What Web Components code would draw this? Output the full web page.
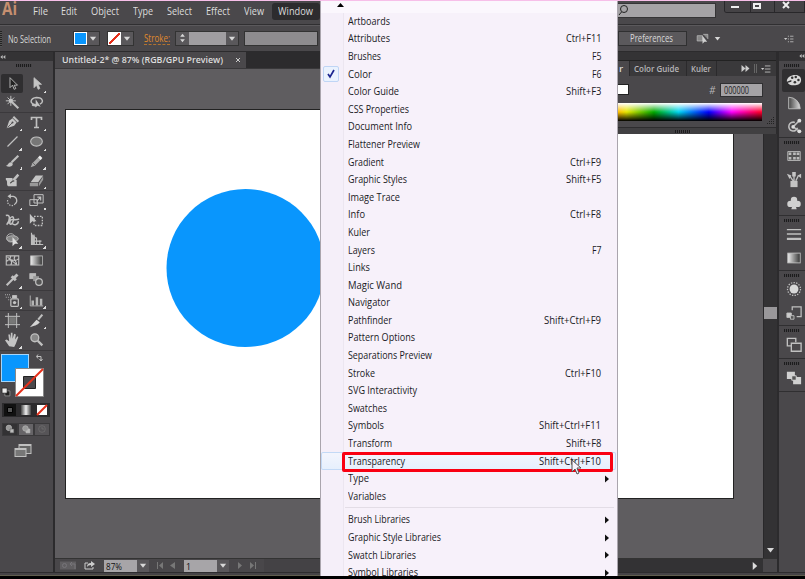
<!DOCTYPE html>
<html lang="en">
<head>
<meta charset="utf-8">
<title>Untitled-2</title>
<style>
  html, body { margin: 0; height: 100%; overflow: hidden; background: #000; }
</style>
</head>
<body>
<ai-app></ai-app>

<script>
// text run with a set width, glyphs are condensed to fit it
customElements.define('ui-label', class extends HTMLElement {
  connectedCallback() {
    this.attachShadow({mode: 'open'});
    this.shadowRoot.innerHTML = `
      <style>
        :host { display: inline-block; flex: none; vertical-align: top; }
        span { display: inline-block; white-space: pre; transform-origin: 0 50%; vertical-align: top; }
      </style>
      <span></span>
    `;
    const span = this.shadowRoot.querySelector('span');
    span.textContent = this.getAttribute('text');
    const want = parseFloat(this.getAttribute('w'));
    const have = span.getBoundingClientRect().width;
    if (want && have) {
      this.style.width = want + 'px';
      span.style.transform = `scaleX(${want / have})`;
    }
  }
});

const icons = {
  select: '<path d="M6 2v12l3-3 2 5 2-1-2-4h4z" fill="#222" stroke="#ccc"/>',
  direct: '<path d="M6 2v12l3-3 2 5 2-1-2-5h4z" fill="#c4c4c4"/>',
  wand: '<path d="M8 8l8 8" stroke-width="2.500"/><path d="M7 1v12M1 7h12M3 3l8 8M11 3l-8 8" stroke-width="1.200"/><circle cx="7" cy="7" r="2.500" fill="#c4c4c4" stroke="none"/>',
  lasso: '<path d="M7 14c2-2 0-3-1-3-5-1-5-7 3-8 8 0 9 6 4 8M6 11c-3 0-2 3 1 1" stroke-width="1.700"/><path d="M8 5v10l2-2 4 1z" fill="#c4c4c4" stroke="none"/>',
  pen: '<path d="M2 16l3-9 4-3 5 5-3 4z" fill="#c4c4c4" stroke="none"/><path d="M10 2l6 6" stroke-width="2.500"/><path d="M3 15l6-6" stroke="#4a484b"/><circle cx="9" cy="9" r="1.200" fill="#4a484b" stroke="none"/>',
  type: '<path d="M3 6V3h12v3M9 3v12M6 15h6" stroke-width="2"/>',
  line: '<path d="M3 15L15 3" stroke-width="1.400"/>',
  ellipse: '<ellipse cx="9" cy="9" rx="7" ry="5.500" fill="#777" stroke-width="1.300"/>',
  brush: '<path d="M8 10l8-8" stroke-width="2.500"/><path d="M1 14c3 0 3-5 7-4 4 4-2 7-7 4z" fill="#c4c4c4" stroke="none"/>',
  pencil: '<path d="M2 16l2-5 8-8 3 3-8 8z" fill="#aaa" stroke="none"/><path d="M12 3l3 3" stroke="#eee" stroke-width="3"/><path d="M5 11l3 3" stroke="#555"/>',
  blob: '<path d="M1 6h8v3l5-1v8H4C1 14 4 10 1 8z" fill="#c4c4c4" stroke="none"/><path d="M9 10l7-8" stroke-width="3"/><path d="M6 12c2 0 3-4 5-2" stroke="#444" stroke-width="1.300"/>',
  eraser: '<path d="M2 11l6-8h9l-6 8z" fill="#c4c4c4" stroke="none"/><path d="M1 12h10v4H1zM12 12l5-8v4l-5 8z" fill="#999" stroke="none"/>',
  rotate: '<path d="M6 4h4a5 5 0 0 1 2 9" stroke-width="1.500"/><path d="M12 13a5 5 0 0 1-8-6" stroke-dasharray="1.500 1.500" stroke-width="1.500"/><path d="M7 1v6L3 4z" fill="#c4c4c4" stroke="none"/>',
  scale: '<path d="M6 2h11v10H6zM1 8h9v7H1z" stroke-width="1.200"/><path d="M9 10l5-5m-4 0h4v4" stroke-width="1.400"/>',
  warp: '<path d="M1 3c6-2 5 6 1 11M5 13c0-11 7-10 5-4s-5 6-4 1 5 0 11-3M9 13c2 2 7 1 7-3" stroke-width="1.800"/>',
  transform: '<path d="M6 4h10v11H6z" stroke-dasharray="2 1.500" stroke-width="1.600"/><path d="M1 1v12l3-3h5z" fill="#c4c4c4" stroke="none"/>',
  builder: '<circle cx="7" cy="7" r="5"/><ellipse cx="9" cy="8" rx="7" ry="3.500" fill="#888"/><path d="M9 6v11l3-3h4z" fill="#ddd" stroke="none"/>',
  perspective: '<path d="M3 1v14h14M6 3v12M9 7v8M13 10v5M3 7h6M3 11h12" stroke-width="1.400"/><path d="M3 2l4 3v10H3z" fill="#bbb" stroke="none"/>',
  mesh: '<path d="M1.500 3.500h15v11h-15zM2 10c5-6 8 3 14-3M7 4c-4 5 4 5 0 10M12 4c-4 5 4 5 1 10M3 5l11 9" stroke-width="1.300"/>',
  gradient: '<rect x="2" y="3.500" width="14" height="11" fill="url(#g)"/>',
  dropper: '<path d="M2 16l9-9" stroke-width="2.500"/><path d="M8 5l5 5M11 7l4-4" stroke-width="3.500"/>',
  blend: '<rect x="1" y="2" width="7" height="6" fill="#bbb"/><path d="M5 5h7v6H5z" fill="#999" stroke="none"/><circle cx="12" cy="12" r="4" fill="#555" stroke-width="1.500"/>',
  spray: '<rect x="7" y="7" width="9" height="9" rx="1" stroke-width="1.500"/><path d="M9 6h5V3H9z" fill="#c4c4c4"/><circle cx="11.500" cy="11.500" r="2" fill="#c4c4c4" stroke="none"/><path d="M0 2h7M1 5h6M4 8h2" stroke-dasharray="1 1.500" stroke-width="1.300"/>',
  graph: '<path d="M1.500 3v12.500H17"/><path d="M3 9h3v6H3zM8 5h3v10H8zM13 7h3v8h-3z" fill="#b5b5b5" stroke="none"/>',
  artboard: '<path d="M4 0v18M14 0v18M0 4h18M0 14h18" stroke-width="1.200"/><path d="M5 5h8v8H5z" fill="#777" stroke="none"/>',
  slice: '<path d="M1 17l8-9 4 3c-3 4-7 4-12 6z" fill="#d4d4d4" stroke="none"/><path d="M11 8l5-6" stroke-width="2.500"/>',
  hand: '<path d="M5 17L0 10l2-1 3 2-1-8 2 0 1 5V1h2v7l2-6 2 1-1 6 3-4 1 1-3 8-2 4z" fill="#c4c4c4" stroke="none"/>',
  zoom: '<circle cx="7" cy="7" r="4.700" fill="#888" stroke-width="1.600"/><path d="M10.500 10.500L16 16" stroke-width="2.800"/>',
  palette: '<path d="M1 11C0 3 17 0 17 9c0 8-14 7-15 3l4-1 0-2z" fill="#d8d8d8" stroke="none"/><g fill="#333" stroke="none"><circle cx="7" cy="6.500" r="1.400"/><circle cx="11" cy="5.500" r="1.400"/><circle cx="14" cy="9" r="1.400"/><circle cx="10" cy="11.500" r="1.500"/></g>',
  fan: '<path d="M3 2.500v13h13A13 13 0 0 0 3 2.500z" fill="url(#g2)"/>',
  kuler: '<path d="M10 5a5 5 0 1 0 3 6M8 10l6-6M8 10l6 4" stroke-width="1.700"/><g fill="#ddd" stroke="none"><circle cx="8" cy="10" r="2"/><circle cx="15" cy="3" r="2.200"/><circle cx="15" cy="15" r="2.200"/></g>',
  swatches: '<path d="M2 4h14v10H2z" fill="#555"/><path d="M3 5h3v3H3zM8 5h3v3H8zM12 5h3v3h-3zM3 10h3v3H3zM8 10h3v3H8zM12 10h3v3h-3z" fill="#bbb" stroke="none"/>',
  brushes: '<path d="M5 10h8v7H5z" fill="#c4c4c4" stroke="none"/><path d="M8 10L4 4M9 10V4M11 10l3-6" stroke-width="1.500"/><path d="M1 2l5 2-2 4zM7 0h4v5H7zM13 4l4-2v5z" fill="#c4c4c4" stroke="none"/>',
  club: '<g fill="#d0d0d0" stroke="none"><circle cx="9" cy="5.500" r="3.600"/><circle cx="5" cy="10" r="3.600"/><circle cx="13" cy="10" r="3.600"/><path d="M8 9h2l2 7H6z"/></g>',
  stroke: '<path d="M1 4h16M1 9h16" stroke-width="1.500"/><path d="M1 14.500h16" stroke-width="2.500"/>',
  transparency: '<circle cx="9" cy="9" r="5" fill="#d8d8d8" stroke="none"/><circle cx="9" cy="9" r="7.300" stroke-dasharray="1.500 1.500" stroke-width="1.400"/>',
  styles: '<path d="M7 6V2h10v11h-5" stroke-width="1.400"/><path d="M1 9h5v5H1z" fill="#ccc"/><path d="M5 12h4v4H5z" fill="#555"/>',
  layers: '<path d="M6 10H1.500V1.500H11V6" stroke-width="1.500"/><path d="M6 7h11v9H6z" stroke-width="1.500"/>',
  pathfinder: '<path d="M1 2h9v8H1zM8 8h9v8H8z" fill="#d0d0d0" stroke="none"/><path d="M6.500 6.500h5v5h-5z" fill="#555" stroke="#ddd"/>',
  screen: '<rect x="5" y="2.500" width="12" height="9" fill="#666"/><rect x="1" y="6.500" width="11" height="8" fill="#777"/><path d="M1 7h11M5 3h12" stroke-width="2"/>',
  swap: '<path d="M4 5h8v8M6 1L3 5l3 4M9 10l3 4 3-4" stroke-width="2"/>',
  defaults: '<path d="M7 7h9v9H7z" fill="#222"/><path d="M2 2h9v9H2z" fill="#eee" stroke="#111"/>',
  shapes: '<circle cx="7" cy="7" r="5" fill="#999"/><path d="M9 9h7v7H9z" fill="#bbb" stroke="#555"/>',
  shapes2: '<path d="M9 9h7v7H9z" fill="#bbb"/><circle cx="8" cy="8" r="5" fill="#999"/>',
  shapes3: '<circle cx="9" cy="9" r="6" stroke="#777"/><path d="M9 5v4h4" stroke="#777"/>',
  arrange: '<path d="M1 4h8v8H1zM10 2h7v7" fill="#888"/><path d="M9 4v12l3-3h4z" fill="#d0d0d0" stroke="none"/>',
  menu: '<path d="M7 4h2m2 0h6M7 9h2m2 0h6M7 14h2m2 0h6" stroke-width="1.500"/><path d="M0 7h6l-3 4z" fill="#ccc" stroke="none"/>',
  flyout: '<path d="M7 3.500h10M7 9h10M7 14.500h10" stroke-width="1.600"/><path d="M0 7h6l-3 4z" fill="#ccc" stroke="none"/>',
  down: '<path d="M2 4h14l-7 9z" fill="#d8d8d8" stroke="none"/>',
  up: '<path d="M2 14h14L9 5z" fill="#d8d8d8" stroke="none"/>',
  right: '<path d="M4 0l10 9-10 9z" fill="#ddd" stroke="none"/>',
  forward: '<path d="M1 2l8 7-8 7zM9 2l8 7-8 7z" fill="#ccc" stroke="none"/>',
  back: '<path d="M8 3L1 9l7 6zM16 3L9 9l7 6z" fill="#bbb" stroke="none"/>'
};

customElements.define('ui-icon', class extends HTMLElement {
  connectedCallback() {
    this.attachShadow({mode: 'open'});
    this.shadowRoot.innerHTML = `
      <style>
        :host { display: block; width: 18px; height: 18px; flex: none; color: #c0c0c0; }
        svg { display: block; width: 100%; height: 100%; }
      </style>
      <svg viewBox="0 0 18 18" fill="none" stroke="currentColor">
        <defs>
          <linearGradient id="g"><stop stop-color="#eee"/><stop offset="1" stop-color="#333"/></linearGradient>
          <linearGradient id="g2"><stop stop-color="#444"/><stop offset="1" stop-color="#ddd"/></linearGradient>
        </defs>
        ${icons[this.getAttribute('name')]}
      </svg>
    `;
  }
});

customElements.define('ai-menubar', class extends HTMLElement {
  connectedCallback() {
    this.attachShadow({mode: 'open'});
    const items = [['File', 15], ['Edit', 16], ['Object', 28], ['Type', 20], ['Select', 25], ['Effect', 24], ['View', 20]];
    this.shadowRoot.innerHTML = `
      <style>
        :host { display: flex; height: 23px; background: #4a484b; color: #ddd; font-size: 11px; border-bottom: 1px solid #302f31; }
        .logo { width: 33px; color: #c68f70; font: bold 17px/16px "Open Sans", sans-serif; box-sizing: border-box; padding-left: 2px; }
        .items { display: grid; grid-template-columns: 28px 30px 42px 34px 39px 38px 28px 48px; line-height: 20px; width: 290px; }
        .open { background: #2d2c2e; border-radius: 3px; margin: 2px 0 4px; line-height: 16px; padding-left: 6px; width: 48px; box-sizing: border-box; }
        .space { flex: 1; }
        .search { width: 97px; height: 13px; background: #a5a3a6; border: 1px solid #353436; margin: 2px 8px 0 0; box-sizing: content-box; }
        .search svg { display: block; }
        .win { display: grid; grid-template-columns: 26px 24px 30px; height: 11px; border: 1px solid #28272a; border-top: 0; border-radius: 0 0 0 3px; width: 79px; overflow: hidden; }
        .win svg { display: block; border-right: 1px solid #29282a; background: #454346; }
      </style>
      <div class="logo"><ui-label text="Ai" w="15"></ui-label></div>
      <div class="items">
        ${items.map(i => `<ui-label text="${i[0]}" w="${i[1]}"></ui-label>`).join('')}
        <div class="open"><ui-label text="Window" w="35"></ui-label></div>
      </div>
      <div class="space"></div>
      <div class="search"><svg width="12" height="13" fill="none" stroke="#222"><circle cx="6" cy="5" r="3.500"/><path d="M3.500 8L1 11"/></svg></div>
      <div class="win">
        <svg width="25" height="11"><path d="M6 6h8" stroke="#eee" stroke-width="2"/></svg>
        <svg width="23" height="11"><path d="M3 3h6v4H3z" fill="none" stroke="#eee" stroke-width="2"/></svg>
        <svg width="30" height="11"><path d="M8 1l6 6M14 1L8 7" stroke="#eee" stroke-width="2"/></svg>
      </div>
    `;
  }
});

customElements.define('ai-control-bar', class extends HTMLElement {
  connectedCallback() {
    this.attachShadow({mode: 'open'});
    this.shadowRoot.innerHTML = `
      <style>
        :host { display: flex; align-items: center; height: 27px; background: #4a484b; border-top: 1px solid #5b595c; border-bottom: 1px solid #2c2b2d; color: #d8d8d8; font: 10px/14px "Open Sans", sans-serif; box-sizing: border-box; }
        .grip { width: 2px; height: 16px; background: repeating-linear-gradient(#222 0 1px, #555 1px 2px); margin-right: 6px; }
        .no { width: 65px; }
        .box { display: flex; height: 15px; border: 1px solid #333; box-sizing: border-box; background: #5a585b; }
        .chip { width: 13px; background: #0996fd; border: 1px solid #fff; box-sizing: border-box; }
        .none { background: linear-gradient(135deg, #fff 43%, #e5301b 43% 57%, #fff 57%); }
        .box ui-icon { width: 8px; height: 8px; margin: 3px 2px; }
        .stroke { color: #e08a2c; border-bottom: 1px dashed #b17230; line-height: 11px; margin: 1px 5px 0 10px; height: 11px; }
        .step { width: 13px; display: flex; flex-direction: column; align-items: center; }
        .box .step ui-icon { width: 7px; height: 6px; margin: 0; }
        .field { background: #a09ea1; width: 37px; }
        .long { width: 74px; background: #8e8c8f; margin-left: 5px; }
        .pref { width: 69px; height: 15px; line-height: 13px; border: 1px solid #303031; background: #5b595c; margin-left: 300px; padding-left: 11px; box-sizing: border-box; }
        .arr { width: 13px; height: 12px; margin-left: 9px; }
        .dn { width: 7px; height: 8px; margin-left: 5px; }
        .menu { width: 12px; height: 10px; margin: 0 10px 0 auto; }
      </style>
      <div class="grip"></div>
      <div class="no"><ui-label text="No Selection" w="43"></ui-label></div>
      <div class="box"><div class="chip"></div><ui-icon name="down"></ui-icon></div>
      <div class="box" style="margin-left:7px"><div class="chip none"></div><ui-icon name="down"></ui-icon></div>
      <div class="stroke"><ui-label text="Stroke:" w="26"></ui-label></div>
      <div class="box"><div class="step"><ui-icon name="up"></ui-icon><ui-icon name="down"></ui-icon></div><div class="field"></div><ui-icon name="down"></ui-icon></div>
      <div class="box long"></div>
      <div class="pref"><ui-label text="Preferences" w="43"></ui-label></div>
      <ui-icon class="arr" name="arrange"></ui-icon>
      <ui-icon class="dn" name="down"></ui-icon>
      <ui-icon class="menu" name="menu"></ui-icon>
    `;
  }
});

customElements.define('ai-grip', class extends HTMLElement {
  connectedCallback() {
    this.attachShadow({mode: 'open'});
    this.shadowRoot.innerHTML = `
      <style>
        :host { display: block; width: 16px; height: 3px; background: repeating-linear-gradient(90deg, #1c1c1d 0 1px, #454346 1px 2px); }
      </style>
    `;
  }
});

customElements.define('ai-tools', class extends HTMLElement {
  connectedCallback() {
    this.attachShadow({mode: 'open'});
    // names with * have a hidden tool group behind them
    const groups = [
      [40, 'select direct* wand lasso'],
      [78, 'pen* type* line* ellipse* brush* pencil* blob eraser*'],
      [59.5, 'rotate* scale* warp* transform builder* perspective*'],
      [40, 'mesh gradient dropper* blend'],
      [20, 'spray* graph*'],
      [40, 'artboard slice* hand* zoom']
    ];
    this.shadowRoot.innerHTML = `
      <style>
        :host { display: block; width: 55px; background: #4a484b; border-right: 2px solid #2c2b2d; box-sizing: border-box; }
        .top { height: 9px; background: #343335; display: flex; align-items: center; }
        .top ui-icon { width: 6px; height: 6px; }
        ai-grip { margin: 3px 0 6px 16px; }
        .group { display: grid; grid-template-columns: 24px 24px; box-sizing: border-box; border-bottom: 1px solid #3b393c; }
        .tool { display: flex; align-items: center; justify-content: center; min-height: 0; }
        .tool ui-icon { width: 15px; height: 15px; }
        .more { background: linear-gradient(135deg, transparent 50%, #ddd 50%) right 2px bottom 1px / 3px 3px no-repeat; }
        .on { background: #2f2e30; border-radius: 2px; margin: 1px 1px; }
        .fillstroke { display: grid; grid-template-columns: 14px 14px 15px; grid-template-rows: 14px 14px 14px; margin: 3px 0 0 1px; }
        .fill { grid-area: 1 / 1 / 3 / 3; background: #0996fd; border: 1px solid #a5d5fa; box-sizing: border-box; }
        .stroke { grid-area: 2 / 2 / 4 / 4; }
        .stroke svg { display: block; }
        .swap { grid-area: 1 / 3; width: 9px; height: 9px; justify-self: end; }
        .def { grid-area: 3 / 1; width: 10px; height: 10px; margin-top: 5px; }
        .modes { display: grid; grid-template-columns: 16px 16px 16px; height: 14px; margin: 7px 0 0 2px; background: #2c2b2d; width: 48px; }
        .modes svg { display: block; margin: 1px; }
        .draw { display: grid; grid-template-columns: 16px 16px 16px; height: 13px; margin: 6px 0 0 2px; width: 48px; gap: 0; }
        .draw div { border: 1px solid #3a393b; background: #666467; display: flex; justify-content: center; align-items: center; }
        .draw div:first-child { background: #333234; }
        .draw div:last-child { background: #565457; }
        .draw ui-icon { width: 10px; height: 10px; }
        .screen { margin: 6px 0 0 14px; }
      </style>
      <div class="top"><ui-icon name="back"></ui-icon></div>
      <ai-grip></ai-grip>
      ${groups.map(([h, names]) => `
        <div class="group" style="height:${h}px">
          ${names.split(' ').map(n => `
            <div class="tool ${n.endsWith('*') ? 'more' : ''} ${n == 'select' ? 'on' : ''}"><ui-icon name="${n.replace('*', '')}"></ui-icon></div>
          `).join('')}
        </div>
      `).join('')}
      <div class="fillstroke">
        <div class="fill"></div>
        <div class="stroke">
          <svg width="29" height="29"><path d="M.5.500h28v28H.5z" fill="#fff" stroke="#888"/><path d="M8.500 8.500h12v12h-12z" fill="#4a484b" stroke="#222"/><path d="M1 28L28 1" stroke="#e5301b" stroke-width="2"/></svg>
        </div>
        <ui-icon class="swap" name="swap"></ui-icon>
        <ui-icon class="def" name="defaults"></ui-icon>
      </div>
      <div class="modes">
        <svg width="14" height="12"><path d="M1 0h12v12H1z" fill="#111"/><path d="M4.500 3.500h5v5h-5z" fill="#555" stroke="#000"/></svg>
        <svg width="14" height="12"><defs><linearGradient id="m"><stop stop-color="#444"/><stop offset=".5" stop-color="#eee"/><stop offset="1" stop-color="#444"/></linearGradient></defs><path d="M2 1h10v10H2z" fill="url(#m)"/></svg>
        <svg width="14" height="12"><path d="M2 1h10v10H2z" fill="#fff"/><path d="M2 11L12 1" stroke="#e5301b" stroke-width="2"/></svg>
      </div>
      <div class="draw">
        <div><ui-icon name="shapes"></ui-icon></div><div><ui-icon name="shapes2"></ui-icon></div><div><ui-icon name="shapes3"></ui-icon></div>
      </div>
      <ui-icon class="screen" name="screen"></ui-icon>
    `;
  }
});

customElements.define('ai-document', class extends HTMLElement {
  connectedCallback() {
    this.attachShadow({mode: 'open'});
    this.shadowRoot.innerHTML = `
      <style>
        :host { display: flex; flex-direction: column; flex: 1; min-width: 0; color: #ddd; }
        .tabs { height: 16px; background: #2c2b2d; }
        .tab { display: flex; width: 191px; height: 16px; box-sizing: border-box; background: #4a484b; font: 600 9.500px/16px "Open Sans", sans-serif; padding-left: 7px; }
        .tab svg { margin: 5px 0 0 12px; }
        .view { display: flex; flex: 1; min-height: 0; }
        .canvas { flex: 1; background: #5f5d60; padding: 40px 0 0 10px; border-top: 1px solid #39383a; box-sizing: border-box; min-width: 0; }
        .artboard { width: 667px; height: 388px; background: #fff; border: 1px solid #222; }
        .artboard svg { display: block; }
        .vscroll { width: 14px; background: #333234; display: flex; flex-direction: column; justify-content: space-between; border-left: 1px solid #29282a; box-sizing: border-box; }
        .thumb { height: 12px; background: #99979a; margin-top: 239px; }
        .vscroll ui-icon { width: 9px; height: 9px; margin: 0 0 3px 2px; }
        .status { height: 14px; display: flex; align-items: center; background: #49474a; border-top: 1px solid #333; font: 9.500px/11px "Open Sans", sans-serif; box-sizing: border-box; }
        .field { background: #a7a5a8; color: #111; height: 12px; line-height: 13px; box-sizing: border-box; padding-left: 2px; }
        .dd { width: 12px; height: 12px; background: #59575a; display: flex; align-items: center; justify-content: center; }
        .dd ui-icon { width: 8px; height: 8px; }
        .hscroll { flex: 1; display: flex; justify-content: flex-end; align-items: center; height: 13px; background: linear-gradient(90deg, #444245 60px, #333234 60px); }
        .hscroll ui-icon { width: 8px; height: 8px; margin-right: 4px; }
        .corner { width: 14px; height: 13px; background: #4a484b; }
      </style>
      <div class="tabs"><div class="tab"><ui-label text="Untitled-2* @ 87% (RGB/GPU Preview)" w="161"></ui-label><svg width="6" height="6" stroke="#ccc"><path d="M1 1l4 4M5 1L1 5"/></svg></div></div>
      <div class="view">
        <div class="canvas"><div class="artboard"><svg width="260" height="250"><circle cx="179.500" cy="158" r="79" fill="#0996fd"/></svg></div></div>
        <div class="vscroll"><div class="thumb"></div><ui-icon name="down"></ui-icon></div>
      </div>
      <div class="status">
        <svg width="49" height="13" fill="none" stroke="#77757a"><path d="M5 2.500h16v8H5z" fill="#605e61" stroke="none"/><circle cx="9.500" cy="6.500" r="2"/><path d="M20 10V5h-5m2-2l-2 2 2 2"/><g stroke="#ccc"><path d="M33 4h-3v6h8V8"/><path d="M32 8q0-4 4-4V2l4 3-4 3V6q-3 0-4 2z" fill="#ccc" stroke="none"/></g></svg>
        <div class="field" style="width:33px"><ui-label text="87%" w="16"></ui-label></div>
        <div class="dd"><ui-icon name="down"></ui-icon></div>
        <svg width="35" height="12" fill="#777"><path d="M8 2h1v7H8zM14 2v7l-4-3.500zM26 2v7l-5-3.500z"/></svg>
        <div class="field" style="width:33px"><ui-label text="1" w="5"></ui-label></div>
        <div class="dd"><ui-icon name="down"></ui-icon></div>
        <svg width="35" height="12" fill="#777"><path d="M9 2v7l4-3.500zM21 2v7l4-3.500zM26 2h1v7h-1z"/></svg>
        <div class="hscroll"><ui-icon name="right"></ui-icon></div>
        <div class="corner"></div>
      </div>
    `;
  }
});

customElements.define('ai-dock', class extends HTMLElement {
  connectedCallback() {
    this.attachShadow({mode: 'open'});
    const groups = [[77, ['palette', 'fan', 'kuler']], [78, ['swatches', 'brushes', 'club']], [55, ['stroke', 'gradient']], [55, ['transparency', 'styles']], [33, ['layers']], [33, ['pathfinder']]];
    this.shadowRoot.innerHTML = `
      <style>
        :host { display: block; width: 28px; background: #4a484b; border-left: 2px solid #2c2b2d; box-sizing: border-box; overflow: hidden; }
        .top { height: 9px; background: #343335; }
        .top ui-icon { width: 6px; height: 6px; margin-left: 20px; padding-top: 1px; }
        .group { display: flex; flex-direction: column; align-items: center; border-bottom: 1px solid #302f31; box-sizing: border-box; padding-top: 3px; }
        .cell { flex: 1; width: 23px; display: flex; align-items: center; justify-content: center; margin-left: 3px; }
        .cell ui-icon { width: 16px; height: 16px; }
        .on { background: #302f31; border-radius: 2px; margin-top: 2px; }
      </style>
      <div class="top"><ui-icon name="back"></ui-icon></div>
      ${groups.map(([h, names]) => `
        <div class="group" style="height:${h}px">
          <ai-grip></ai-grip>
          ${names.map(n => `<div class="cell ${n == 'palette' ? 'on' : ''}"><ui-icon name="${n}"></ui-icon></div>`).join('')}
        </div>
      `).join('')}
    `;
  }
});

customElements.define('ai-color-panel', class extends HTMLElement {
  connectedCallback() {
    this.attachShadow({mode: 'open'});
    this.shadowRoot.innerHTML = `
      <style>
        :host { display: block; width: 160px; height: 82px; background: #4a484b; color: #b8b6b9; border-right: 1px solid #2c2b2d; box-sizing: border-box; }
        .top { height: 9px; background: #343335; border-bottom: 1px solid #222; box-sizing: border-box; }
        .tabs { display: flex; align-items: center; height: 15px; background: #3a393b; font: 600 9.500px/15px "Open Sans", sans-serif; }
        .tabs > div { border-right: 1px solid #2b2a2c; box-sizing: border-box; height: 15px; }
        .tabs .cur { width: 13px; background: #4a484b; color: #ddd; text-align: right; padding-right: 6px; }
        .ff { width: 9px; height: 9px; margin-left: 24px; }
        .tabs .bar { height: 9px; width: 3px; border: solid #666; border-width: 0 1px; margin: 0 0 0 4px; }
        .fly { width: 12px; height: 10px; margin-left: 3px; }
        .row { display: flex; align-items: center; height: 27px; box-sizing: border-box; font: 10px/12px "Open Sans", sans-serif; }
        .chip { width: 10px; height: 9px; background: #fff; border: 1px solid #222; }
        .hash { margin: 0 5px 0 80px; font-style: italic; width: 6px; }
        .hex { width: 43px; height: 14px; background: #a5a3a6; color: #222; border: 1px solid #303032; box-sizing: border-box; padding-left: 3px; }
        .base { display: flex; align-items: flex-end; }
        .spectrum { width: 144px; height: 18px; margin-left: 1px; background:
          linear-gradient(#fff 0, #fff0 50%, #0000 50%, #000 100%),
          linear-gradient(90deg, #fb0 0, #e6e600 6%, #0a0 25%, #00d5f0 42%, #00f 63%, #f0f 79%, #f03 98%); }
        .foot { display: flex; justify-content: center; align-items: center; height: 7px; background: #414042; border-top: 1px solid #2d2c2e; box-sizing: border-box; padding-right: 28px; }
        .base svg { margin: 0 0 -4px 5px; }
        .foot { margin-top: 6px; }
      </style>
      <div class="top"></div>
      <div class="tabs">
        <div class="cur">r</div>
        <div style="padding-left:4px;width:57px"><ui-label text="Color Guide" w="45"></ui-label></div>
        <div style="padding-left:4px;width:30px"><ui-label text="Kuler" w="20"></ui-label></div>
        <ui-icon class="ff" name="forward"></ui-icon><div class="bar"></div><ui-icon class="fly" name="flyout"></ui-icon>
      </div>
      <div class="row"><div class="chip"></div><div class="hash">#</div><div class="hex"><ui-label text="000000" w="25"></ui-label></div></div>
      <div class="base"><div class="spectrum"></div><svg width="8" height="8" fill="#222"><path d="M6 0h1v1H6zM4 2h1v1H4zM6 2h1v1H6zM2 4h1v1H2zM4 4h1v1H4zM6 4h1v1H6zM0 6h1v1H0zM2 6h1v1H2zM4 6h1v1H4zM6 6h1v1H6z"/></svg></div>
      <div class="foot"><ai-grip></ai-grip></div>
    `;
  }
});

customElements.define('menu-item', class extends HTMLElement {
  connectedCallback() {
    this.attachShadow({mode: 'open'});
    const [text, w, key, keyW] = this.getAttribute('data').split('|');
    this.shadowRoot.innerHTML = `
      <style>
        :host { display: grid; grid-template-columns: 27px 1fr auto 15px; height: 17.600px; line-height: 17px; align-items: center; box-sizing: border-box; }
        .check { width: 16px; height: 16px; border: 1px solid #bfd5f5; border-radius: 2px; background: #eaf2fe; margin-left: 2px; box-sizing: border-box; }
        svg { display: block; }
        .arrow { margin-left: 4px; }
        :host([hot]) { background: linear-gradient(#f4f5fd, #e5effd); box-shadow: inset 0 0 0 1px #c3d9f6; border-radius: 2px; }
      </style>
      <div>${this.hasAttribute('checked') ? '<div class="check"><svg width="14" height="14"><path d="M4 7l2 3 4-7" fill="none" stroke="#1b2590" stroke-width="1.700"/></svg></div>' : ''}</div>
      <div><ui-label text="${text}" w="${w}"></ui-label></div>
      <div>${key && key != '>' ? `<ui-label text="${key}" w="${keyW}"></ui-label>` : ''}</div>
      <div>${key == '>' ? '<svg class="arrow" width="5" height="8"><path d="M0 .5v7L4 4z" fill="#111"/></svg>' : ''}</div>
    `;
  }
});

customElements.define('window-menu', class extends HTMLElement {
  connectedCallback() {
    this.attachShadow({mode: 'open'});
    const items = [
      'Artboards|42', 'Attributes|42|Ctrl+F11|35.5', 'Brushes|33|F5|9.5', 'Color|24|F6|9.5', 'Color Guide|51|Shift+F3|35.5',
      'CSS Properties|61', 'Document Info|64', 'Flattener Preview|72', 'Gradient|36|Ctrl+F9|31', 'Graphic Styles|59|Shift+F5|35.5',
      'Image Trace|52', 'Info|17|Ctrl+F8|31', 'Kuler|22', 'Layers|27|F7|9.5', 'Links|22', 'Magic Wand|54', 'Navigator|42',
      'Pathfinder|44|Shift+Ctrl+F9|57', 'Pattern Options|67', 'Separations Preview|84', 'Stroke|27|Ctrl+F10|36',
      'SVG Interactivity|69', 'Swatches|39', 'Symbols|36|Shift+Ctrl+F11|62', 'Transform|44|Shift+F8|35.5',
      'Transparency|57|Shift+Ctrl+F10|62', 'Type|21|>', 'Variables|38', '-',
      'Brush Libraries|62|>', 'Graphic Style Libraries|93|>', 'Swatch Libraries|68|>', 'Symbol Libraries|70|>'
    ];
    this.shadowRoot.innerHTML = `
      <style>
        :host { display: block; width: 298px; height: 575px; overflow: hidden; box-sizing: border-box; border: solid #aaa5ad; border-width: 0 1px; color: #1a1a1e; font: 10px "Open Sans", sans-serif; background: linear-gradient(90deg, #f5eff9 22px, #ece6f0 22px 23px, #f7f1fa 23px); }
        .scroll { height: 11.500px; background: #fbf7fd; }
        .scroll svg { display: block; margin-left: 15px; }
        menu-item { width: 295px; }
        hr { border: 0; border-top: 1px solid #e3dde6; margin: 2px 3px 3px 24px; }
      </style>
      <div class="scroll"><svg width="9" height="8"><path d="M1 6h7L4.500 2z" fill="#000"/></svg></div>
      ${items.map(i => i == '-' ? '<hr>' : `<menu-item data="${i}" ${i.startsWith('Color|') ? 'checked' : ''} ${i.startsWith('Transparency') ? 'hot' : ''}></menu-item>`).join('')}
    `;
  }
});

customElements.define('ai-app', class extends HTMLElement {
  connectedCallback() {
    this.attachShadow({mode: 'open'});
    this.shadowRoot.innerHTML = `
      <style>
        :host { display: flex; flex-direction: column; position: relative; width: 805px; height: 576px; overflow: hidden; border-top: 1px solid #f7bfe9; box-sizing: border-box; font: 10px "Open Sans", "Noto Sans", sans-serif; background: #4a484b; }
        .work { display: flex; flex: 1; min-height: 0; }
        .edge { height: 4px; background: linear-gradient(#2d2c2e 1px, #454346 1px 3px, #605e4e 3px); }
        ai-color-panel { position: absolute; left: 617px; top: 51px; }
        window-menu { position: absolute; left: 320px; top: 0; }
        .mark { position: absolute; left: 342px; top: 451px; width: 271px; height: 20px; border: 3px solid #fa0012; box-sizing: border-box; border-radius: 2px; }
        .cursor { position: absolute; left: 571px; top: 458px; }
      </style>
      <ai-menubar></ai-menubar>
      <ai-control-bar></ai-control-bar>
      <div class="work">
        <ai-tools></ai-tools>
        <ai-document></ai-document>
        <ai-dock></ai-dock>
      </div>
      <div class="edge"></div>
      <ai-color-panel></ai-color-panel>
      <window-menu></window-menu>
      <div class="mark"></div>
      <svg class="cursor" width="12" height="17"><path d="M1 1v12l3-3 2 5 2-1-2-5h4z" fill="#f7f3fb" stroke="#555"/></svg>
    `;
  }
});
</script>
</body>
</html>
